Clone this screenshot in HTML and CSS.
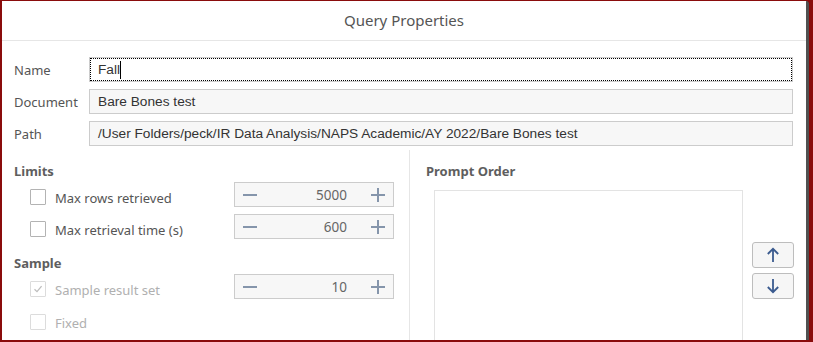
FILE: index.html
```html
<!DOCTYPE html>
<html>
<head>
<meta charset="utf-8">
<link rel="stylesheet" href="styles.css">
</head>
<body>
<div class="dialog">
  <div class="header">Query Properties</div>
  <div class="form">
    <div class="frow">
      <div class="flabel">Name</div>
      <div class="finput focus"><span>Fall</span><span class="caret"></span></div>
    </div>
    <div class="frow">
      <div class="flabel">Document</div>
      <div class="finput ro">Bare Bones test</div>
    </div>
    <div class="frow">
      <div class="flabel">Path</div>
      <div class="finput ro">/User Folders/peck/IR Data Analysis/NAPS Academic/AY 2022/Bare Bones test</div>
    </div>
  </div>
  <div class="lower">
    <div class="left">
      <div class="group">Limits</div>
      <div class="crow">
        <span class="cb"></span><span class="clabel">Max rows retrieved</span>
        <div class="stepper"><span class="minus"></span><span class="val">5000</span><span class="plus"></span></div>
      </div>
      <div class="crow r2">
        <span class="cb"></span><span class="clabel">Max retrieval time (s)</span>
        <div class="stepper"><span class="minus"></span><span class="val">600</span><span class="plus"></span></div>
      </div>
      <div class="group g2">Sample</div>
      <div class="crow dis">
        <span class="cb checked"><svg width="12" height="12" viewBox="0 0 12 12"><path d="M2.5 6.2 L5 8.6 L9.6 3.2" fill="none" stroke="#bdbdbd" stroke-width="1.3"/></svg></span><span class="clabel">Sample result set</span>
        <div class="stepper"><span class="minus"></span><span class="val">10</span><span class="plus"></span></div>
      </div>
      <div class="crow dis r4">
        <span class="cb"></span><span class="clabel">Fixed</span>
      </div>
    </div>
    <div class="right">
      <div class="group">Prompt Order</div>
      <div class="porder">
        <div class="list"></div>
        <div class="btns">
          <button class="abtn"><svg width="14" height="16" viewBox="0 0 14 16"><path d="M7 15 V2 M1.8 7 L7 1.8 L12.2 7" fill="none" stroke="#3b5b8f" stroke-width="1.8"/></svg></button>
          <button class="abtn"><svg width="14" height="16" viewBox="0 0 14 16"><path d="M7 1 V14 M1.8 9 L7 14.2 L12.2 9" fill="none" stroke="#3b5b8f" stroke-width="1.8"/></svg></button>
        </div>
      </div>
    </div>
  </div>
</div>
</body>
</html>
```
FILE: styles.css
```css
html, body {
  margin: 0;
  padding: 0;
}
body {
  width: 813px;
  height: 342px;
  overflow: hidden;
  background: #8a0c0c;
  font-family: "Noto Sans", "Open Sans", sans-serif;
  font-size: 13px;
  color: #555;
}
.dialog {
  margin: 1px 0 0 2px;
  width: 804px;
  height: 339px;
  background: #fff;
  border-right: 3px solid #505050;
  border-top-right-radius: 3px;
  display: flex;
  flex-direction: column;
  overflow: hidden;
}
.header {
  height: 39px;
  line-height: 38px;
  text-align: center;
  font-size: 15px;
  color: #555;
  border-bottom: 1px solid #e6e6e6;
  flex: none;
}
.form {
  padding: 16px 13px 0 12px;
  display: flex;
  flex-direction: column;
  gap: 7px;
}
.frow {
  display: flex;
  align-items: center;
  height: 25px;
}
.flabel {
  width: 75px;
  flex: none;
  color: #555;
}
.finput {
  flex: 1;
  height: 23px;
  box-sizing: content-box;
  border: 1px solid #cccccc;
  padding: 0 8px;
  display: flex;
  align-items: center;
  font-family: "Liberation Sans", Arial, sans-serif;
  font-size: 13.7px;
  color: #333;
  white-space: nowrap;
}
.finput.ro {
  background: #f7f7f7;
}
.finput.focus {
  background: #fff;
  outline: 1px dotted #000;
  outline-offset: -2px;
}
.caret {
  display: inline-block;
  width: 1px;
  height: 18px;
  background: #000;
}
.lower {
  flex: 1;
  display: flex;
  margin-top: 4px;
  min-height: 0;
}
.left {
  width: 395px;
  flex: none;
  padding: 11px 0 0 12px;
}
.group {
  height: 20px;
  line-height: 20px;
  font-weight: 700;
  color: #5e5e5e;
}
.g2 {
  margin-top: 14px;
}
.crow {
  display: flex;
  align-items: center;
  height: 25px;
  margin-top: 1px;
  padding-left: 16px;
}
.crow.r2 {
  margin-top: 7px;
}
.crow.r4 {
  margin-top: 8px;
}
.cb {
  width: 14px;
  height: 14px;
  border: 1px solid #b3b3b3;
  border-radius: 1px;
  flex: none;
  display: flex;
  align-items: center;
  justify-content: center;
  margin-top: 5px;
}
.dis .cb {
  border-color: #dcdcdc;
}
.clabel {
  width: 179px;
  flex: none;
  margin-left: 9px;
  color: #555;
  font-size: 13px;
  margin-top: 6px;
}
.dis .clabel {
  color: #b0b0b0;
}
.stepper {
  width: 158px;
  height: 23px;
  border: 1px solid #cccccc;
  background: #f7f7f7;
  display: flex;
  align-items: center;
  flex: none;
}
.minus, .plus {
  width: 14px;
  height: 14px;
  position: relative;
  flex: none;
}
.minus {
  margin-left: 8px;
}
.plus {
  margin-left: 24px;
  margin-right: 8px;
}
.minus::before, .plus::before, .plus::after {
  content: "";
  position: absolute;
  background: #8595ab;
}
.minus::before, .plus::before {
  left: 0;
  top: 6px;
  width: 14px;
  height: 2px;
}
.plus::after {
  left: 6px;
  top: 0;
  width: 2px;
  height: 14px;
}
.val {
  flex: 1;
  text-align: right;
  color: #666;
  font-size: 13.5px;
}
.right {
  flex: 1;
  border-left: 1px solid #e6e6e6;
  padding: 11px 12px 0 16px;
  display: flex;
  flex-direction: column;
}
.porder {
  flex: 1;
  display: flex;
  margin-top: 9px;
  padding-left: 8px;
}
.list {
  width: 307px;
  border: 1px solid #e3e3e3;
  border-bottom: none;
  flex: none;
}
.btns {
  margin-left: 9px;
  margin-top: 52px;
  display: flex;
  flex-direction: column;
  gap: 5px;
}
.abtn {
  width: 42px;
  height: 26px;
  padding: 0;
  margin: 0;
  border: 1px solid #bdbdbd;
  border-radius: 3px;
  background: #f6f6f6;
  display: flex;
  align-items: center;
  justify-content: center;
}
```
